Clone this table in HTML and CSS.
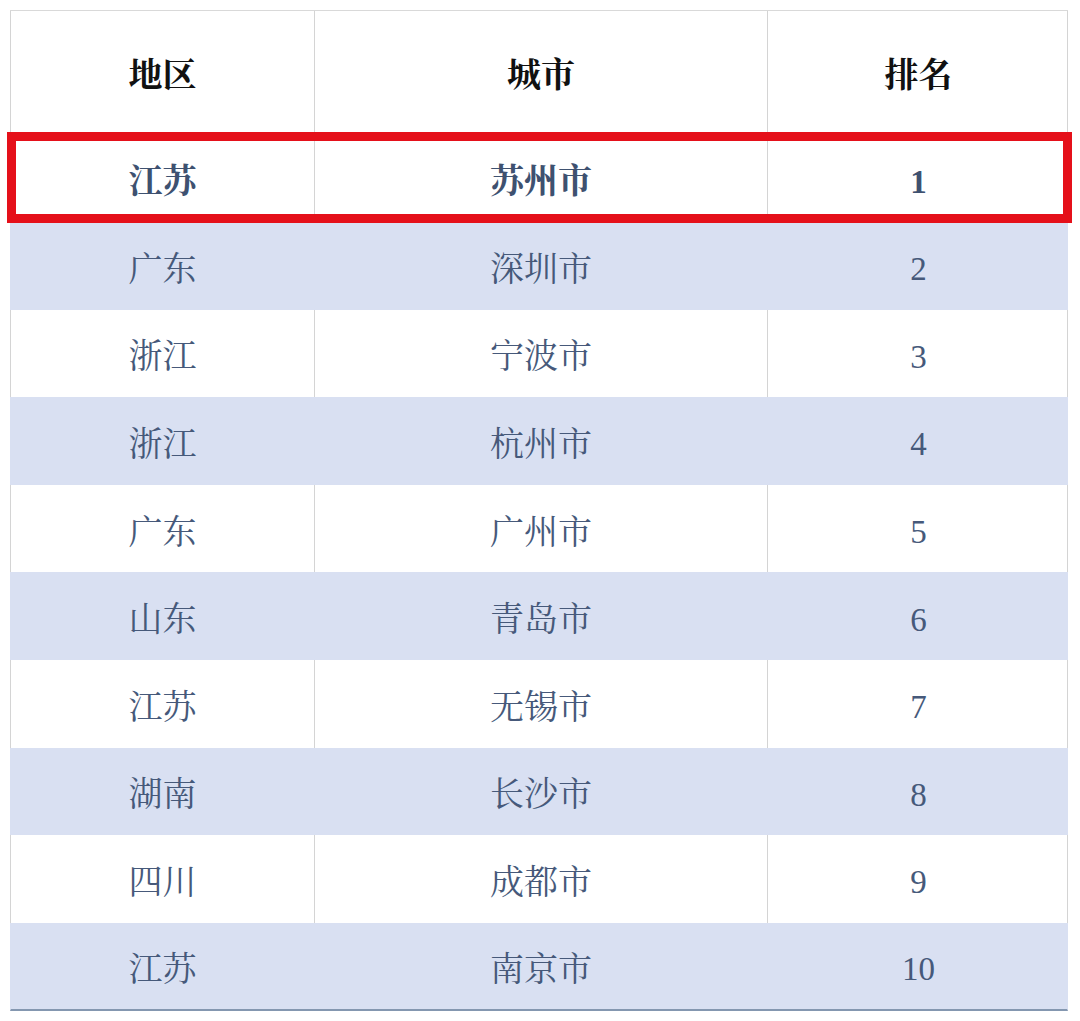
FILE: index.html
```html
<!DOCTYPE html>
<html lang="zh-CN">
<head>
<meta charset="utf-8">
<link rel="stylesheet" href="styles.css">
</head>
<body>
<div class="table">
  <div class="row head">
    <div class="cell">地区</div>
    <div class="cell">城市</div>
    <div class="cell">排名</div>
  </div>
  <div class="row top">
    <div class="cell">江苏</div>
    <div class="cell">苏州市</div>
    <div class="cell num">1</div>
  </div>
  <div class="row band">
    <div class="cell">广东</div>
    <div class="cell">深圳市</div>
    <div class="cell num">2</div>
  </div>
  <div class="row">
    <div class="cell">浙江</div>
    <div class="cell">宁波市</div>
    <div class="cell num">3</div>
  </div>
  <div class="row band">
    <div class="cell">浙江</div>
    <div class="cell">杭州市</div>
    <div class="cell num">4</div>
  </div>
  <div class="row">
    <div class="cell">广东</div>
    <div class="cell">广州市</div>
    <div class="cell num">5</div>
  </div>
  <div class="row band">
    <div class="cell">山东</div>
    <div class="cell">青岛市</div>
    <div class="cell num">6</div>
  </div>
  <div class="row">
    <div class="cell">江苏</div>
    <div class="cell">无锡市</div>
    <div class="cell num">7</div>
  </div>
  <div class="row band">
    <div class="cell">湖南</div>
    <div class="cell">长沙市</div>
    <div class="cell num">8</div>
  </div>
  <div class="row">
    <div class="cell">四川</div>
    <div class="cell">成都市</div>
    <div class="cell num">9</div>
  </div>
  <div class="row band last">
    <div class="cell">江苏</div>
    <div class="cell">南京市</div>
    <div class="cell num">10</div>
  </div>
</div>
</body>
</html>
```
FILE: styles.css
```css
html, body {
  margin: 0;
  padding: 0;
  background: #ffffff;
}
body {
  font-family: "Liberation Serif", "Noto Serif CJK SC", "Noto Sans CJK SC", serif;
  color: #46597a;
}
.table {
  margin: 10px 0 0 10px;
  width: 1058px;
  border-top: 1px solid #d9d9d9;
}
.row {
  display: grid;
  grid-template-columns: 303px 453px 302px;
  height: 87.6px;
  background: #ffffff;
  border-left: 1px solid #d4d4d4;
  border-right: 1px solid #d4d4d4;
  box-sizing: border-box;
}
.row .cell {
  display: flex;
  align-items: center;
  justify-content: center;
  font-size: 34px;
  line-height: 1;
  padding-top: 8px;
}
.row .cell + .cell {
  border-left: 1px solid #d4d4d4;
}
.row.band {
  background: #d9e0f2;
  border-left-color: #d9e0f2;
  border-right-color: #d9e0f2;
}
.row.band .cell + .cell {
  border-left-color: #d9e0f2;
}
.row .num {
  font-size: 33px;
}
.head {
  height: 121px;
  color: #111111;
  font-weight: bold;
}
.head .cell {
  padding-top: 8px;
}
.top {
  height: 90px;
  position: relative;
  font-weight: bold;
  color: #3e5170;
}
.top .cell {
  padding-top: 10px;
}
.top::after {
  content: "";
  position: absolute;
  left: -4px;
  right: -5px;
  top: 0;
  bottom: -1px;
  border: 9px solid #e5101a;
  pointer-events: none;
}
.last {
  border-bottom: 2px solid #8497b0;
  height: 88px;
}
```
